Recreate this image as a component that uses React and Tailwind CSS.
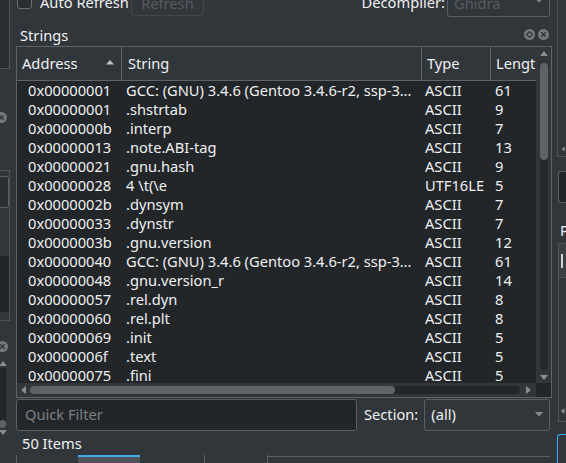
import React from 'react';

const rows = [
  ['0x00000001', 'GCC: (GNU) 3.4.6 (Gentoo 3.4.6-r2, ssp-3…', 'ASCII', '61'],
  ['0x00000001', '.shstrtab', 'ASCII', '9'],
  ['0x0000000b', '.interp', 'ASCII', '7'],
  ['0x00000013', '.note.ABI-tag', 'ASCII', '13'],
  ['0x00000021', '.gnu.hash', 'ASCII', '9'],
  ['0x00000028', '4 \\t(\\e', 'UTF16LE', '5'],
  ['0x0000002b', '.dynsym', 'ASCII', '7'],
  ['0x00000033', '.dynstr', 'ASCII', '7'],
  ['0x0000003b', '.gnu.version', 'ASCII', '12'],
  ['0x00000040', 'GCC: (GNU) 3.4.6 (Gentoo 3.4.6-r2, ssp-3…', 'ASCII', '61'],
  ['0x00000048', '.gnu.version_r', 'ASCII', '14'],
  ['0x00000057', '.rel.dyn', 'ASCII', '8'],
  ['0x00000060', '.rel.plt', 'ASCII', '8'],
  ['0x00000069', '.init', 'ASCII', '5'],
  ['0x0000006f', '.text', 'ASCII', '5'],
  ['0x00000075', '.fini', 'ASCII', '5'],
];

// small scroll arrows
const Arrow = ({ dir, className = '' }) => {
  const pts = {
    up: '0,6 4,1 8,6',
    down: '0,2 8,2 4,7',
    left: '6,0 6,8 1,4',
    right: '2,0 2,8 7,4',
  }[dir];
  return (
    <svg width="8" height="8" viewBox="0 0 8 8" className={className}>
      <polygon points={pts} fill="#8a8d90" />
    </svg>
  );
};

const CloseIcon = ({ className = '' }) => (
  <svg width="11" height="11" viewBox="0 0 11 11" className={className}>
    <circle cx="5.5" cy="5.5" r="5.5" fill="#75797d" />
    <path d="M3.3 3.3 L7.7 7.7 M7.7 3.3 L3.3 7.7" stroke="#31363b" strokeWidth="1.4" />
  </svg>
);

const FloatIcon = ({ className = '' }) => (
  <svg width="11" height="11" viewBox="0 0 11 11" className={className}>
    <circle cx="5.5" cy="5.5" r="5.5" fill="#75797d" />
    <path d="M5.5 2.6 L8.4 5.5 L5.5 8.4 L2.6 5.5 Z" fill="none" stroke="#31363b" strokeWidth="1.3" />
  </svg>
);

const LeftStrip = () => (
  <div className="w-[16px] shrink-0 flex flex-col">
    <div className="h-[69px] w-[10px] bg-[#2a2e32] border-r border-b border-[#4f5357]" />
    <div className="h-[43px]" />
    <CloseIcon className="-ml-[4px]" />
    <div className="h-[47px]" />
    <div className="h-[151px] w-[10px] border-r border-t border-b border-[#4f5357] flex flex-col">
      <div className="mt-[5px] h-[32px] w-[9px] border border-l-0 rounded-r-[3px] border-[#5b5f63] bg-[#2a2e32]" />
      <div className="mt-[48px] h-[56px] w-[9px] bg-[#232629]" />
    </div>
    <div className="h-[20px]" />
    <CloseIcon className="-ml-[3px]" />
    <div className="h-[8px]" />
    <Arrow dir="up" className="-ml-[1px]" />
    <div className="w-[6px] h-[60px] bg-[#232629] flex flex-col justify-end items-center">
      <div className="w-[7px] h-[8px] rounded-full bg-[#5f6266] -ml-[1px]" />
    </div>
    <Arrow dir="down" className="-ml-[1px]" />
  </div>
);

const RightStrip = () => (
  <div className="w-[14px] shrink-0 flex flex-col">
    <div className="h-[161px] ml-[5px] border-l border-b border-[#4f5357] flex items-end pb-[3px] pl-[3px]">
      <Arrow dir="left" />
    </div>
    <div className="h-[14px]" />
    <div className="h-[33px] ml-[6px] border border-r-0 rounded-l-[3px] border-[#5b5f63] bg-[#232629]" />
    <div className="h-[41px] ml-[8px] flex items-end pb-[3px]">P</div>
    <div className="h-[183px] ml-[6px] border-l border-t border-b border-[#4f5357] flex flex-col">
      <div className="h-[34px] border-b border-[#4f5357] bg-[#3a3f44] flex items-center pl-[2px]">
        <div className="w-[2px] h-[14px] bg-[#d0d2d4]" />
      </div>
      <div className="flex-1 flex items-end pb-[6px] pl-[1px]">
        <Arrow dir="left" />
      </div>
    </div>
    <div className="h-[12px]" />
    <div className="h-[30px] ml-[5px] border-l border-t border-[#3daee9] rounded-tl-[3px]" />
  </div>
);

export default function App() {
  return (
    <div className="w-[566px] h-[463px] overflow-hidden flex bg-[#31363b] text-[#eff0f1] font-['Noto_Sans',sans-serif] text-[14.67px] leading-[20px]">
      <LeftStrip />

      <div className="w-[536px] shrink-0 flex flex-col">
        {/* top toolbar, cut off by the crop */}
        <div className="h-[32px] -mt-[15px] flex items-center">
          <div className="ml-[1px] w-[15px] h-[15px] rounded-[3px] border border-[#6a6e72] bg-[#2a2e32]" />
          <span className="ml-[8px] pt-[1px]">Auto Refresh</span>
          <div className="ml-[2px] w-[73px] h-[30px] rounded-[3px] border border-[#43474b] flex items-center justify-center pt-[3px] text-[#575b5f]">
            Refresh
          </div>
          <span className="ml-auto mr-[2px] pt-[1px]">Decompiler:</span>
          <div className="w-[103px] h-[31px] mr-[2px] rounded-[3px] border border-[#5b5f63] flex items-center pl-[6px] pr-[6px] pt-[3px] text-[#575b5f]">
            <span>Ghidra</span>
            <svg width="8" height="5" viewBox="0 0 8 5" className="ml-auto -mt-[4px]">
              <polygon points="0,0 8,0 4,4.5" fill="#8a8d90" />
            </svg>
          </div>
        </div>

        {/* dock title */}
        <div className="h-[29px] flex items-end">
          <div className="h-[20px] flex items-center pl-[4px] pb-[2px] w-full">
            <span>Strings</span>
            <div className="ml-auto mr-[3px] flex gap-[3px] -mt-[2px]">
              <FloatIcon />
              <CloseIcon />
            </div>
          </div>
        </div>

        {/* table */}
        <div className="h-[352px] border border-[#606468] grid grid-cols-[519px_15px] grid-rows-[34px_302px_14px]">
          <div className="flex border-b border-[#606468] overflow-hidden">
            <div className="w-[105px] shrink-0 border-r border-[#606468] flex items-center pl-[5px] pb-[2px]">
              <span>Address</span>
              <svg width="8" height="5" viewBox="0 0 8 5" className="ml-auto mr-[7px]">
                <polygon points="0,4.5 8,4.5 4,0" fill="#bfc1c3" />
              </svg>
            </div>
            <div className="w-[300px] shrink-0 border-r border-[#606468] flex items-center pl-[6px] pb-[2px]">String</div>
            <div className="w-[69px] shrink-0 border-r border-[#606468] flex items-center pl-[5px] pb-[2px]">Type</div>
            <div className="w-[45px] shrink-0 flex items-center pl-[5px] pb-[2px] overflow-hidden whitespace-nowrap">Length</div>
          </div>

          <div className="row-span-2 bg-[#31363b] flex flex-col items-center pt-[3px]">
            <Arrow dir="up" />
            <div className="mt-[5px] w-[8px] h-[307px] rounded-full bg-[#26292c] flex flex-col">
              <div className="h-[97px] rounded-full bg-[#5f6266]" />
            </div>
            <Arrow dir="down" className="mt-[3px]" />
          </div>

          <div className="bg-[#232629] overflow-hidden flex flex-col">
            {rows.map((r, i) => (
              <div key={i} className="h-[19px] shrink-0 flex items-center pb-[2px] whitespace-nowrap">
                <div className="w-[105px] shrink-0 pl-[11px]">{r[0]}</div>
                <div className="w-[300px] shrink-0 pl-[4px] overflow-hidden">{r[1]}</div>
                <div className="w-[69px] shrink-0 pl-[3px]">{r[2]}</div>
                <div className="w-[45px] shrink-0 pl-[4px]">{r[3]}</div>
              </div>
            ))}
          </div>

          <div className="flex items-center pl-[3px] pr-[4px]">
            <Arrow dir="left" />
            <div className="ml-[2px] flex-1 h-[8px] rounded-full bg-[#232629] flex">
              <div className="w-[365px] h-[8px] rounded-full bg-[#5f6266]" />
            </div>
            <Arrow dir="right" className="ml-[4px]" />
          </div>
          <div className="bg-[#232629]" />
        </div>

        {/* filter row */}
        <div className="h-[33px] flex items-center">
          <div className="w-[341px] h-[32px] rounded-[3px] border border-[#5b5f63] bg-[#232629] flex items-center pl-[8px] pb-[2px] text-[#7c8084]">
            Quick Filter
          </div>
          <span className="ml-[7px] pb-[2px]">Section:</span>
          <div className="ml-[6px] w-[126px] h-[32px] rounded-[3px] border border-[#5b5f63] flex items-center pl-[6px] pr-[6px]">
            <span className="pb-[2px]">(all)</span>
            <svg width="8" height="5" viewBox="0 0 8 5" className="ml-auto">
              <polygon points="0,0 8,0 4,4.5" fill="#8a8d90" />
            </svg>
          </div>
        </div>

        <div className="h-[24px] flex items-center pl-[6px] pb-[1px]">50 Items</div>

        {/* bottom tab bar */}
        <div className="flex-1 flex">
          <div className="w-[62px] border-l border-[#5b5f63]" />
          <div className="w-[62px] bg-[#4d5257] border-t-2 border-[#3daee9]" />
          <div className="w-[65px] border-r border-[#5b5f63]" />
          <div className="w-[63px] border-r border-[#5b5f63]" />
          <div className="flex-1 mr-[2px] border-t border-[#5b5f63] mt-[1px]" />
        </div>
      </div>

      <RightStrip />
    </div>
  );
}
